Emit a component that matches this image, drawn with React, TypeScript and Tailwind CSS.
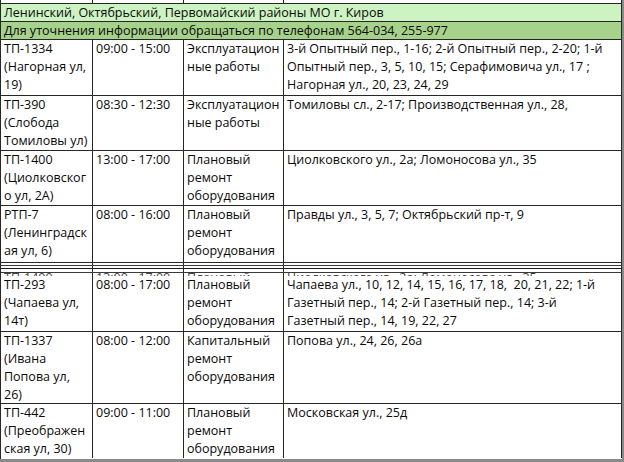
import React from "react";

type Row = { h: string; cells: string[][] };

const COLS = "grid grid-cols-[92px_91px_100px_338px]";

const rows: Row[] = [
  {
    h: "h-[56px]",
    cells: [
      ["ТП-1334", "(Нагорная ул,", "19)"],
      ["09:00 - 15:00"],
      ["Эксплуатацион", "ные работы"],
      [
        "3-й Опытный пер., 1-16; 2-й Опытный пер., 2-20; 1-й",
        "Опытный пер., 3, 5, 10, 15; Серафимовича ул., 17 ;",
        "Нагорная ул., 20, 23, 24, 29",
      ],
    ],
  },
  {
    h: "h-[55px]",
    cells: [
      ["ТП-390", "(Слобода", "Томиловы ул)"],
      ["08:30 - 12:30"],
      ["Эксплуатацион", "ные работы"],
      ["Томиловы сл., 2-17; Производственная ул., 28,"],
    ],
  },
  {
    h: "h-[55px]",
    cells: [
      ["ТП-1400", "(Циолковског", "о ул, 2А)"],
      ["13:00 - 17:00"],
      ["Плановый", "ремонт", "оборудования"],
      ["Циолковского ул., 2а; Ломоносова ул., 35"],
    ],
  },
  {
    h: "h-[57px]",
    cells: [
      ["РТП-7", "(Ленинградск", "ая ул, 6)"],
      ["08:00 - 16:00"],
      ["Плановый", "ремонт", "оборудования"],
      ["Правды ул., 3, 5, 7; Октябрьский пр-т, 9"],
    ],
  },
];

const rowsAfter: Row[] = [
  {
    h: "h-[56px]",
    cells: [
      ["ТП-293", "(Чапаева ул,", "14т)"],
      ["08:00 - 17:00"],
      ["Плановый", "ремонт", "оборудования"],
      [
        "Чапаева ул., 10, 12, 14, 15, 16, 17, 18,  20, 21, 22; 1-й",
        "Газетный пер., 14; 2-й Газетный пер., 14; 3-й",
        "Газетный пер., 14, 19, 22, 27",
      ],
    ],
  },
  {
    h: "h-[72px]",
    cells: [
      ["ТП-1337", "(Ивана", "Попова ул,", "26)"],
      ["08:00 - 12:00"],
      ["Капитальный", "ремонт", "оборудования"],
      ["Попова ул., 24, 26, 26а"],
    ],
  },
  {
    h: "h-[54px]",
    cells: [
      ["ТП-442", "(Преображен", "ская ул, 30)"],
      ["09:00 - 11:00"],
      ["Плановый", "ремонт", "оборудования"],
      ["Московская ул., 25д"],
    ],
  },
];

function DataRow({ row, last }: { row: Row; last?: boolean }) {
  return (
    <div className={`${COLS} ${row.h} ${last ? "" : "border-b border-[#262626]"}`}>
      {row.cells.map((lines, i) => (
        <div key={i} className="border-r border-[#262626] pl-[3px] leading-[18px]">
          {lines.map((l, j) => (
            <div key={j} className="whitespace-pre">
              {l}
            </div>
          ))}
        </div>
      ))}
    </div>
  );
}

function Spacer({ h, color }: { h: string; color: string }) {
  return (
    <div className={`${COLS} ${h} border-b ${color}`}>
      <div className="border-r border-[#262626]" />
      <div className="border-r border-[#262626]" />
      <div className="border-r border-[#262626]" />
      <div className="border-r border-[#262626]" />
    </div>
  );
}

export default function App() {
  const frag = ["ТП-1400", "13:00 - 17:00", "Плановый", "Циолковского ул., 2а; Ломоносова ул., 35"];
  return (
    <div
      className="w-[624px] h-[462px] bg-[#8a8a8a] overflow-hidden text-[12.5px] text-[#0a0a0a]"
      style={{ fontFamily: '"Open Sans", "Noto Sans", sans-serif' }}
    >
      <div className="w-[622px] h-[459px] bg-white border-l border-[#262626] flex flex-col">
        {/* cut-off row at top */}
        <Spacer h="h-[4px]" color="border-[#262626]" />
        {/* green header rows */}
        <div className="h-[18px] bg-[#cdf3c2] border-r border-b border-[#262626] pl-[3px] leading-[17px] whitespace-nowrap">
          Ленинский, Октябрьский, Первомайский районы МО г. Киров
        </div>
        <div className="h-[18px] bg-[#a7d28b] border-r border-b border-[#262626] pl-[3px] leading-[17px] whitespace-nowrap">
          Для уточнения информации обращаться по телефонам 564-034, 255-977
        </div>
        {rows.map((r, i) => (
          <DataRow key={i} row={r} />
        ))}
        <Spacer h="h-[3px]" color="border-[#3a3a3a]" />
        <Spacer h="h-[3px]" color="border-[#1c1c1c]" />
        <Spacer h="h-[4px]" color="border-[#3a3a3a]" />
        {/* stitched fragment strip: only glyph tops of a cut-off row remain */}
        <div className={`${COLS} h-[3px]`}>
          {frag.map((t, i) => (
            <div key={i} className="border-r border-[#262626] overflow-hidden pl-[3px]">
              <div className="leading-[18px] -mt-[4px] whitespace-nowrap text-[#444]">{t}</div>
            </div>
          ))}
        </div>
        {rowsAfter.map((r, i) => (
          <DataRow key={i} row={r} last={i === rowsAfter.length - 1} />
        ))}
      </div>
    </div>
  );
}
